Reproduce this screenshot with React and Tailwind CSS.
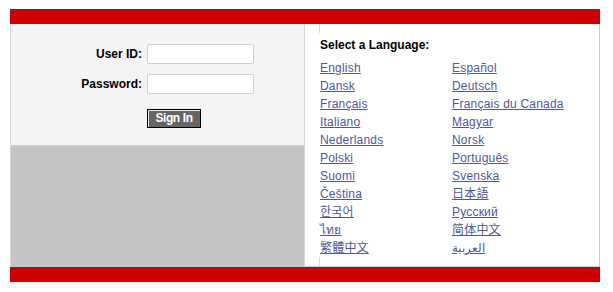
import React from "react";

const left = ["English", "Dansk", "Français", "Italiano", "Nederlands", "Polski", "Suomi", "Čeština", "한국어", "ไทย", "繁體中文"];
const right = ["Español", "Deutsch", "Français du Canada", "Magyar", "Norsk", "Português", "Svenska", "日本語", "Русский", "简体中文", "العربية"];

const font = {
  fontFamily: '"Liberation Sans", Arial, "Noto Sans CJK SC", sans-serif',
};

export default function App() {
  const rows = left.map((l, i) => [l, right[i]]);
  return (
    <div className="pt-[9px] pl-[10px] bg-white min-h-[292px] w-[613px]" style={font}>
      <div className="w-[590px]">
        <div className="h-[15px] bg-[#cc0000]" />
        <div className="flex h-[243px]">
          <div className="w-[295px] flex flex-col border-l border-r border-[#d6d6d6]">
            <div className="h-[121px] bg-[#f4f4f4] pt-[20px] flex flex-col">
              <div className="flex items-center h-[20px]">
                <label className="w-[131px] text-right text-[12px] font-bold text-black">User ID:</label>
                <input className="ml-[5px] w-[107px] h-[20px] bg-white border border-[#cfcfcf] rounded-[2px] outline-none" />
              </div>
              <div className="flex items-center h-[20px] mt-[10px]">
                <label className="w-[131px] text-right text-[12px] font-bold text-black">Password:</label>
                <input type="password" className="ml-[5px] w-[107px] h-[20px] bg-white border border-[#cfcfcf] rounded-[2px] outline-none" />
              </div>
              <div className="mt-[15px] pl-[136px]">
                <button className="w-[54px] h-[19px] bg-[#666666] border border-black shadow-[inset_1px_1px_0_#e8e8e8] text-white font-bold text-[12px] tracking-[-0.4px] leading-[17px] flex items-center justify-center">
                  Sign In
                </button>
              </div>
            </div>
            <div className="flex-1 bg-[#c4c4c4] border-t border-[#d0d0d0]" />
          </div>
          <div className="flex-1 flex flex-col bg-white border-r border-[#cccccc] border-b">
            <div className="ml-[14px] h-[9px] border-l border-[#d8d8d8]" />
            <div className="pl-[15px] pt-[3px]">
              <div className="text-[12px] font-bold text-black leading-[18px]">Select a Language:</div>
              <div className="mt-[5px] grid grid-cols-[132px_auto] text-[12px] leading-[18px] tracking-[0.2px]">
                {rows.map(([a, b]) => (
                  <React.Fragment key={a}>
                    <a href="#" className="text-[#4d5898] underline justify-self-start">{a}</a>
                    <a href="#" className="text-[#4d5898] underline justify-self-start">{b}</a>
                  </React.Fragment>
                ))}
              </div>
            </div>
            <div className="flex-1 ml-[14px] border-l border-[#d8d8d8]" />
          </div>
        </div>
        <div className="h-[15px] bg-[#cc0000]" />
      </div>
    </div>
  );
}
